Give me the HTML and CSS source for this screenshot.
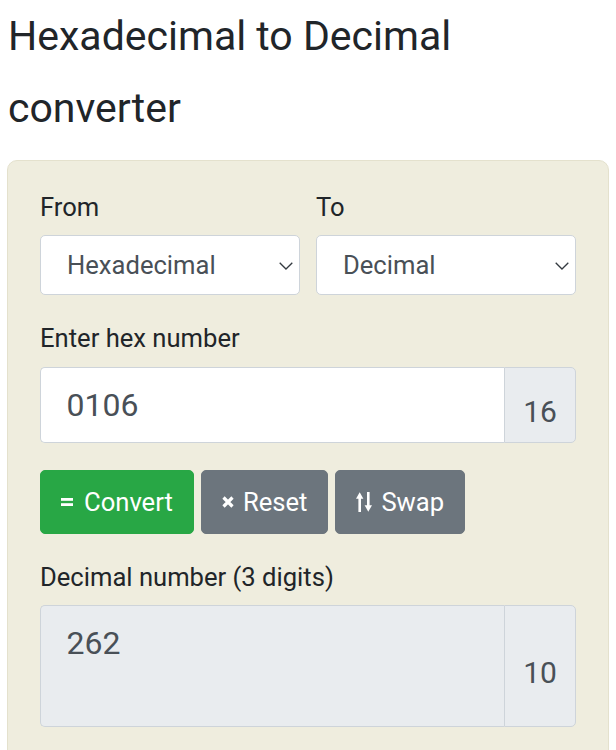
FILE: index.html
```html
<!DOCTYPE html>
<html lang="en">

<head>
	<meta charset="utf-8">
	<title>Hexadecimal to Decimal converter</title>
	<meta name="viewport" content="width=device-width, initial-scale=1">
	<link rel="stylesheet" href="styles.css">
</head>

<body>
	<main class="page">
		<h1 class="title">Hexadecimal to Decimal converter</h1>
		<form class="panel">
			<div class="row">
				<div class="field">
					<label for="from">From</label>
					<div class="select-wrap">
						<select id="from" class="control select">
							<option>Hexadecimal</option>
						</select>
						<svg class="chevron" viewBox="0 0 14 8"><path d="M0.7 0.7L7 7L13.3 0.7"/></svg>
					</div>
				</div>
				<div class="field">
					<label for="to">To</label>
					<div class="select-wrap">
						<select id="to" class="control select">
							<option>Decimal</option>
						</select>
						<svg class="chevron" viewBox="0 0 14 8"><path d="M0.7 0.7L7 7L13.3 0.7"/></svg>
					</div>
				</div>
			</div>

			<div class="field">
				<label for="hex">Enter hex number</label>
				<div class="input-group">
					<textarea id="hex" class="control area" rows="1">0106</textarea>
					<span class="addon">16</span>
				</div>
			</div>

			<div class="actions">
				<button type="button" class="btn btn-green">
					<svg class="icon" width="12" height="8" viewBox="0 0 12 8"><rect y="0" width="12" height="2.8"/><rect y="5.2" width="12" height="2.8"/></svg>
					Convert
				</button>
				<button type="button" class="btn btn-gray btn-reset">
					<svg class="icon" width="12" height="12" viewBox="0 0 12 12"><path d="M1.5 1.5L10.5 10.5M10.5 1.5L1.5 10.5" stroke="#fff" stroke-width="3.2" fill="none"/></svg>
					Reset
				</button>
				<button type="button" class="btn btn-gray btn-swap">
					<svg class="icon" width="16" height="20" viewBox="0 0 16 20"><rect x="2.4" y="5" width="2.6" height="15"/><path d="M0 6.8L3.7 0.3L7.4 6.8Z"/><rect x="11" y="0" width="2.6" height="15"/><path d="M8.6 13.2L12.3 19.7L16 13.2Z"/></svg>
					Swap
				</button>
			</div>

			<div class="field">
				<label for="dec">Decimal number (3 digits)</label>
				<div class="input-group">
					<textarea id="dec" class="control area area-tall" rows="2" readonly>262</textarea>
					<span class="addon">10</span>
				</div>
			</div>
		</form>
	</main>
</body>

</html>
```

FILE: styles.css
```css
*,
*::before,
*::after {
	box-sizing: border-box;
}

:root {
	--text: #212529;
	--muted: #495057;
	--line: #ced4da;
	--fill: #e9ecef;
	--radius: 5px;
	--font: 25.6px;
}

body {
	margin: 0;
	font-family: Roboto, "Liberation Sans", sans-serif;
	color: var(--text);
	background: #fff;
}

.page {
	padding: 0 7px;
}

.title {
	margin: 0 0 16px;
	padding-left: 1px;
	font-size: 41px;
	font-weight: 400;
	line-height: 72px;
}

.panel {
	border: 1px solid #e4e1cd;
	border-radius: 10px;
	padding: 27px 32px 80px;
	background: #efedde;
}

.row {
	display: grid;
	grid-template-columns: 1fr 1fr;
	gap: 16px;
	margin-bottom: 24px;

	.field {
		margin-bottom: 0;
	}
}

.field {
	margin-bottom: 24px;

	label {
		display: block;
		margin-bottom: 9px;
		font-size: var(--font);
		line-height: 38.4px;
	}
}

.control {
	border: 1px solid var(--line);
	border-radius: var(--radius);
	font-family: inherit;
	color: var(--muted);
	background: #fff;
}

.select-wrap {
	position: relative;

	.chevron {
		position: absolute;
		top: 27px;
		right: 7px;
		width: 14px;
		height: 8px;
		fill: none;
		stroke: #343a40;
		stroke-width: 1.3;
		pointer-events: none;
	}
}

.select {
	display: block;
	width: 100%;
	height: 60px;
	padding: 0 40px 0 26px;
	font-size: var(--font);
	appearance: none;
}

.input-group {
	display: flex;
}

.area {
	flex: 1;
	height: 76px;
	border-right: none;
	border-radius: var(--radius) 0 0 var(--radius);
	padding: 12.8px 25.6px;
	font-size: 32px;
	line-height: 48px;
	resize: none;
	overflow: hidden;

	&[readonly] {
		background: var(--fill);
	}
}

.area-tall {
	height: 122px;
}

.addon {
	display: flex;
	align-items: center;
	justify-content: center;
	width: 72px;
	padding-top: 13px;
	border: 1px solid var(--line);
	border-radius: 0 var(--radius) var(--radius) 0;
	font-size: 30px;
	color: var(--muted);
	background: var(--fill);
}

.actions {
	display: flex;
	gap: 7px;
	margin: 27px 0 24px;
}

.btn {
	display: inline-flex;
	align-items: center;
	gap: 11px;
	height: 64px;
	padding: 0 20px;
	border: 1px solid;
	border-radius: var(--radius);
	font-family: inherit;
	font-size: var(--font);
	color: #fff;

	.icon {
		fill: #fff;
		flex-shrink: 0;
	}
}

.btn-green {
	border-color: #28a745;
	background: #28a745;
}

.btn-gray {
	border-color: #6c757d;
	background: #6c757d;
}

.btn-reset {
	gap: 9px;
}

.btn-swap {
	gap: 9px;
}
```
